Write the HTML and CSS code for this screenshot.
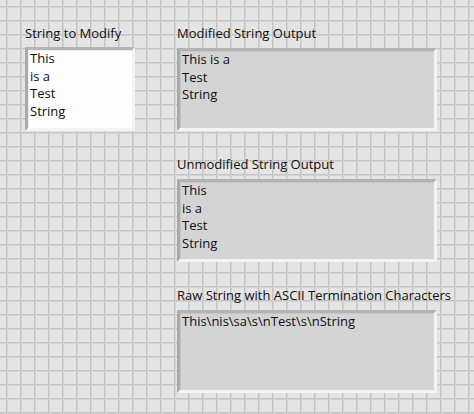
FILE: index.html
```html
<!DOCTYPE html>
<html lang="en">
<head>
<meta charset="utf-8">
<title>String Termination Front Panel</title>
<link rel="stylesheet" href="styles.css">
</head>
<body>
<main class="panel">
  <section class="column column-inputs">
    <div class="control">
      <div class="label">String to Modify</div>
      <div class="field field-control field-tall">This
is a
Test
String</div>
    </div>
  </section>
  <section class="column column-outputs">
    <div class="control">
      <div class="label">Modified String Output</div>
      <div class="field field-indicator">This is a
Test
String</div>
    </div>
    <div class="control">
      <div class="label">Unmodified String Output</div>
      <div class="field field-indicator">This
is a
Test
String</div>
    </div>
    <div class="control">
      <div class="label">Raw String with ASCII Termination Characters</div>
      <div class="field field-indicator">This\nis\sa\s\nTest\s\nString</div>
    </div>
  </section>
</main>
</body>
</html>
```
FILE: styles.css
```css
html, body {
  margin: 0;
  padding: 0;
}

body {
  width: 474px;
  height: 414px;
  overflow: hidden;
  font-family: "Open Sans", "Liberation Sans", Arial, sans-serif;
  color: #0e0e0e;
  background-color: #e4e4e4;
  /* front panel alignment grid */
  background-image:
    linear-gradient(to right, #c4c4c4 1px, #d3d3d3 1px, #d3d3d3 2px, transparent 2px),
    linear-gradient(to bottom, #c4c4c4 1px, #d3d3d3 1px, #d3d3d3 2px, transparent 2px);
  background-size: 14px 14px;
  background-position: 6px 6px;
}

.panel {
  display: flex;
  gap: 42px;
  padding: 25px 0 0 25px;
}

.column {
  display: flex;
  flex-direction: column;
  gap: 25px;
}

.column-inputs {
  width: 110px;
}

.column-outputs {
  width: 260px;
}

.label {
  font-size: 13px;
  line-height: 16px;
  white-space: nowrap;
  margin-bottom: 7px;
}

.field {
  box-sizing: border-box;
  height: 83px;
  padding: 0 0 0 2px;
  font-size: 13px;
  line-height: 17.7px;
  white-space: pre;
  overflow: hidden;
  border-style: solid;
  border-width: 3px;
  border-color: #b3b3b3 #f3f3f3 #f3f3f3 #a9a9a9;
  box-shadow: inset 1px 1px 0 rgba(0, 0, 0, 0.06);
}

.field-control {
  background: #fdfdfd;
}

.field-tall {
  height: 84px;
  margin-top: -1px;
}

.field-indicator {
  background: #d4d4d4;
}
```
